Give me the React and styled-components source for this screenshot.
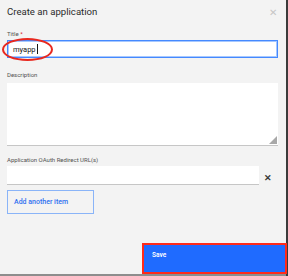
import React from 'react'
import styled, {createGlobalStyle} from 'styled-components'

const Global = createGlobalStyle`
  html, body { margin: 0; padding: 0; background: #f3f3f3; }
  body { font-family: Roboto, "Noto Sans", sans-serif; }
`;

const Frame = styled.div`
  width: 288px;
  height: 276px;
  display: flex;
  background: #3b3b3b;
  overflow: hidden;
`;

const Modal = styled.div`
  width: 286px;
  height: 274px;
  background: #f3f3f3;
  border-bottom: 2px solid #8d8d8d;
  display: flex;
  flex-direction: column;
`;

const Header = styled.div`
  display: flex;
  justify-content: space-between;
  align-items: flex-start;
  padding: 6px 9px 0 7px;
  height: 19px;
`;

const Heading = styled.h2`
  margin: 0;
  font-size: 9.6px;
  font-weight: 400;
  color: #2b2b2b;
`;

const Close = styled.span`
  font-size: 10px;
  line-height: 10px;
  color: #c6c6c6;
  margin-top: 2px;
`;

const Body = styled.div`
  flex: 1;
  padding: 4px 8px 0 7px;
  display: flex;
  flex-direction: column;
`;

const Label = styled.label`
  font-size: 6px;
  color: #525252;
  height: 10px;
  line-height: 10px;
  margin-bottom: ${p => p.gap || 4}px;
  span { color: #da1e28; }
`;

const Field = styled.div`
  position: relative;
  width: ${p => p.w ? p.w + 'px' : 'auto'};
  margin-bottom: ${p => p.gap || 0}px;
`;

const Input = styled.div`
  height: ${p => p.h}px;
  box-sizing: border-box;
  background: #fff;
  border: ${p => p.focus ? '1px solid #4589ff' : 'none'};
  border-bottom: ${p => p.focus ? '1px solid #4589ff' : '1px solid #c6c6c6'};
  box-shadow: ${p => p.focus ? 'inset 0 0 0 1px #a6c8ff' : 'none'};
  font-size: 7.5px;
  color: #161616;
  display: flex;
  align-items: ${p => p.top ? 'flex-start' : 'center'};
  padding-left: 5px;
  position: relative;
`;

const Caret = styled.i`
  display: inline-block;
  width: 1px;
  height: 10px;
  background: #161616;
  margin-left: 1px;
`;

const Grip = styled.svg`
  position: absolute;
  right: 1px;
  bottom: 1px;
`;

const Ring = styled.div`
  position: absolute;
  left: -5px;
  top: -2px;
  width: 47px;
  height: 19px;
  border: 2px solid #e8281f;
  border-radius: 50%;
`;

const UrlRow = styled.div`
  display: flex;
  align-items: center;
  gap: 2px;
  margin-bottom: 5px;
`;

const Remove = styled.span`
  font-size: 9px;
  color: #393939;
  font-weight: 700;
  width: 14px;
  text-align: center;
  margin-top: 4px;
`;

const AddButton = styled.button`
  width: 87px;
  height: 24px;
  box-sizing: border-box;
  background: transparent;
  border: 1px solid #8ab4f8;
  color: #2f6ff0;
  font-family: inherit;
  font-size: 7px;
  font-weight: 500;
  text-align: left;
  padding: 0 0 0 6px;
`;

const Footer = styled.div`
  display: flex;
  justify-content: flex-end;
`;

const SaveButton = styled.button`
  width: 145px;
  height: 31px;
  box-sizing: border-box;
  background: #1f6bff;
  border: 2px solid #ff2a1a;
  color: #fff;
  font-family: inherit;
  font-size: 6.5px;
  font-weight: 600;
  text-align: left;
  padding: 0 0 7px 8px;
  margin-right: -1px;
`;

export default function App() {
  return (
    <>
      <Global />
      <Frame>
        <Modal>
          <Header>
            <Heading>Create an application</Heading>
            <Close>✕</Close>
          </Header>
          <Body>
            <Label gap={1}>Title <span>*</span></Label>
            <Field gap={12}>
              <Input h={18} focus>myapp<Caret /></Input>
              <Ring />
            </Field>
            <Label gap={3}>Description</Label>
            <Field gap={9}>
              <Input h={63} top>
                <Grip width="8" height="8" viewBox="0 0 8 8">
                  <path d="M8 0 L8 8 L0 8 Z" fill="#a8a8a8" />
                </Grip>
              </Input>
            </Field>
            <Label gap={1}>Application OAuth Redirect URL(s)</Label>
            <UrlRow>
              <Field w={252}>
                <Input h={19} />
              </Field>
              <Remove>✕</Remove>
            </UrlRow>
            <AddButton>Add another item</AddButton>
          </Body>
          <Footer>
            <SaveButton>Save</SaveButton>
          </Footer>
        </Modal>
      </Frame>
    </>
  )
}
